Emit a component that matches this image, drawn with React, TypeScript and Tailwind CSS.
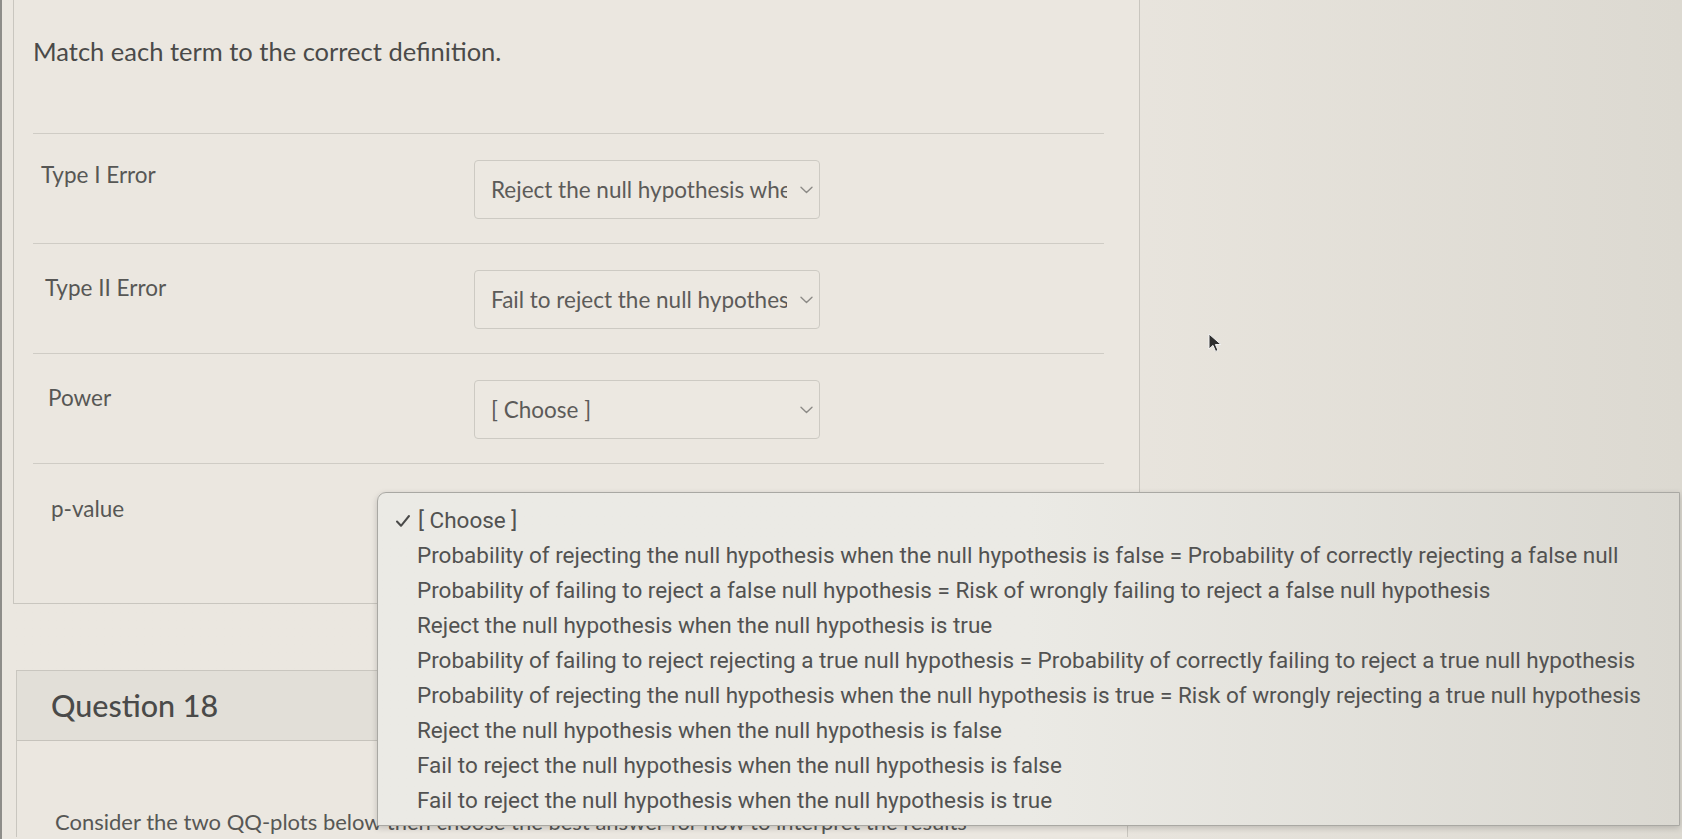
import React from 'react'

const options = [
    'Probability of rejecting the null hypothesis when the null hypothesis is false = Probability of correctly rejecting a false null',
    'Probability of failing to reject a false null hypothesis = Risk of wrongly failing to reject a false null hypothesis',
    'Reject the null hypothesis when the null hypothesis is true',
    'Probability of failing to reject rejecting a true null hypothesis = Probability of correctly failing to reject a true null hypothesis',
    'Probability of rejecting the null hypothesis when the null hypothesis is true = Risk of wrongly rejecting a true null hypothesis',
    'Reject the null hypothesis when the null hypothesis is false',
    'Fail to reject the null hypothesis when the null hypothesis is false',
    'Fail to reject the null hypothesis when the null hypothesis is true',
]

// label indent drifts a little per row in the screenshot
const rows = [
    { term: 'Type I Error', value: 'Reject the null hypothesis when the null hypothesis is true', indent: 'pl-[8px] pt-[26px]' },
    { term: 'Type II Error', value: 'Fail to reject the null hypothesis when the null hypothesis is false', indent: 'pl-[12px] pt-[29px]' },
    { term: 'Power', value: '[ Choose ]', indent: 'pl-[15px] pt-[29px]' },
]

const Chevron = () => (
    <svg width="13" height="8" viewBox="0 0 13 8" fill="none" className="shrink-0">
        <path d="M1 1.2l5.5 5.3 5.5-5.3" stroke="#8c8a86" strokeWidth="1.4" strokeLinecap="round" strokeLinejoin="round" />
    </svg>
)

const SelectBox = ({ value }: { value: string }) => (
    <div className="mt-[26px] flex h-[59px] w-[346px] items-center rounded-[4px] border border-[#cdcac3] bg-[#ece8e1] pl-[16px] pr-[6px]">
        <div className="w-[296px] overflow-hidden whitespace-nowrap text-[22.5px] text-[#5c5b59]">{value}</div>
        <div className="flex flex-1 justify-end">
            <Chevron />
        </div>
    </div>
)

const App = () => {
    return (
        <div className="relative h-[839px] w-[1682px] overflow-hidden border-l-2 border-[#8e8d89] bg-linear-to-r from-[#ebe7e0] from-60% to-[#dcd9d1] font-['Lato','Open_Sans',sans-serif]">
            {/* matching question */}
            <div className="ml-[11px] h-[604px] w-[1127px] border-x border-b border-[#c9c6bf] bg-[#ebe7e0] pl-[19px] pr-[35px]">
                <div className="h-[133px] pt-[35px] text-[25.5px] leading-[32px] text-[#4a4a49]">Match each term to the correct definition.</div>
                {rows.map((r) => (
                    <div key={r.term} className="flex h-[110px] border-t border-[#cfccc5]">
                        <div className={`w-[441px] ${r.indent} text-[22.5px] leading-[30px] text-[#575755]`}>{r.term}</div>
                        <SelectBox value={r.value} />
                    </div>
                ))}
                <div className="flex h-[141px] border-t border-[#cfccc5]">
                    <div className="w-[441px] pl-[18px] pt-[30px] text-[22.5px] leading-[30px] text-[#575755]">p-value</div>
                </div>
            </div>

            {/* next question */}
            <div className="ml-[14px] mt-[66px] w-[1112px] border-x border-t border-[#c9c6bf] bg-[#ebe7e0]">
                <div className="flex h-[70px] items-center border-b border-[#c6c3bc] bg-[#e2dfd8] pl-[34px] text-[30.5px] font-medium text-[#4a4a49]">
                    Question 18
                </div>
                <div className="whitespace-nowrap pl-[38px] pt-[66px] text-[22px] leading-[30px] text-[#575755]">
                    Consider the two QQ-plots below then choose the best answer for how to interpret the results
                </div>
            </div>

            {/* open dropdown menu */}
            <div className="absolute left-[375px] right-[2px] top-[492px] h-[334px] rounded-tl-[9px] border border-[#a9a8a3] bg-linear-to-r from-[#ebeae5] from-50% to-[#dad8d1] pt-[10px] font-['Roboto','Liberation_Sans',sans-serif] text-[22.5px] leading-[35px] text-[#525251] shadow-[0_2px_6px_rgba(0,0,0,0.18)]">
                <div className="flex items-center pl-[17px]">
                    <svg width="16" height="14" viewBox="0 0 16 14" fill="none" className="mr-[7px]">
                        <path d="M2 7.5l4 4.3L14 2" stroke="#4a4a49" strokeWidth="2" strokeLinecap="round" strokeLinejoin="round" />
                    </svg>
                    <span>[ Choose ]</span>
                </div>
                {options.map((o) => (
                    <div key={o} className="whitespace-nowrap pl-[39px]">
                        {o}
                    </div>
                ))}
            </div>

            {/* mouse pointer */}
            <svg width="14" height="20" viewBox="0 0 14 20" className="absolute left-[1206px] top-[333px]">
                <path d="M1 1v15l4-3.6 2.6 6 2.4-1-2.6-5.9H13z" fill="#2e2e2e" stroke="#f2f2f2" strokeWidth="1" />
            </svg>
        </div>
    )
}

export default App
